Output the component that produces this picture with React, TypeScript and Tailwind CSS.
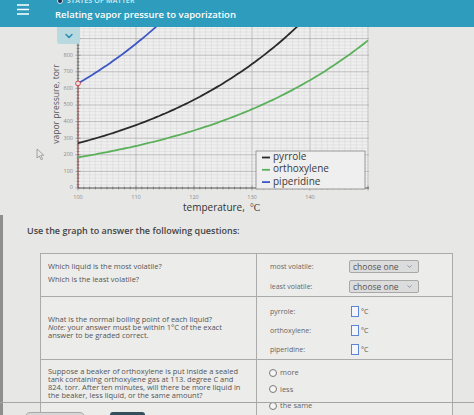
import { ChevronDown } from "lucide-react";

const X0 = 78;
const DEG = 5.8;
const Y0 = 189;
const TORR = 0.166;
const XMAX = 369;
const YTOP = 28;

const tx = (t: number) => X0 + (t - 100) * DEG;
const py = (p: number) => Y0 - p * TORR;

const CURVES = [
  { name: "pyrrole", color: "#2a2a2a", a: 270, b: 0.0339 },
  { name: "orthoxylene", color: "#5bb05b", a: 185, b: 0.0314 },
  { name: "piperidine", color: "#3d57c6", a: 630, b: 0.0322 },
];

function curvePath(a: number, b: number) {
  const pts: string[] = [];
  for (let t = 100; t <= 150.01; t += 0.5) {
    const p = a * Math.exp(b * (t - 100));
    pts.push(`${tx(t).toFixed(1)},${py(p).toFixed(1)}`);
    if (p > 1000) break;
  }
  return "M" + pts.join(" L");
}

function Chart() {
  const degs = Array.from({ length: 51 }, (_, i) => 100 + i);
  const torrs = Array.from({ length: 49 }, (_, i) => i * 20);

  return (
    <svg width={474} height={187} viewBox="0 28 474 187" className="block" fontFamily="'Open Sans', sans-serif">
      <defs>
        <clipPath id="plot">
          <rect x={X0} y={YTOP} width={XMAX - X0} height={Y0 - YTOP} />
        </clipPath>
      </defs>
      <rect x={X0} y={YTOP} width={XMAX - X0} height={Y0 - YTOP} fill="#efefef" />

      {/* grid */}
      {degs.map((d) => (
        <line
          key={"v" + d}
          x1={tx(d)}
          x2={tx(d)}
          y1={YTOP}
          y2={Y0}
          stroke={d % 10 === 0 ? "#a9a9a9" : "#d2d2d2"}
          strokeWidth={d % 10 === 0 ? 0.7 : 0.45}
        />
      ))}
      {torrs.map((p) => (
        <line
          key={"h" + p}
          x1={X0}
          x2={XMAX}
          y1={py(p)}
          y2={py(p)}
          stroke={p % 100 === 0 ? "#a9a9a9" : "#d2d2d2"}
          strokeWidth={p % 100 === 0 ? 0.7 : 0.45}
        />
      ))}

      {/* axes */}
      <line x1={X0} x2={XMAX} y1={Y0} y2={Y0} stroke="#5a5a5a" strokeWidth={0.9} />
      <line x1={X0} x2={X0} y1={YTOP} y2={Y0} stroke="#5a5a5a" strokeWidth={0.9} />
      {degs.map((d) => (
        <line
          key={"xt" + d}
          x1={tx(d)}
          x2={tx(d)}
          y1={Y0 - (d % 10 === 0 ? 2.5 : 1.5)}
          y2={Y0 + (d % 10 === 0 ? 2.5 : 1.5)}
          stroke="#5a5a5a"
          strokeWidth={0.5}
        />
      ))}
      {torrs.map((p) => (
        <line
          key={"yt" + p}
          x1={X0 - (p % 100 === 0 ? 2.5 : 1.5)}
          x2={X0 + (p % 100 === 0 ? 2.5 : 1.5)}
          y1={py(p)}
          y2={py(p)}
          stroke="#5a5a5a"
          strokeWidth={0.5}
        />
      ))}
      <line x1={X0} x2={X0} y1={py(630)} y2={Y0} stroke="#d04848" strokeWidth={1} strokeDasharray="1.5 1.2" />

      {/* tick labels */}
      {[0, 100, 200, 300, 400, 500, 600, 700, 800].map((p) => (
        <text key={"yl" + p} x={73} y={py(p)} fontSize={5.5} fill="#8a8a8a" textAnchor="end" dominantBaseline="middle">
          {p}
        </text>
      ))}
      {[100, 110, 120, 130, 140].map((d) => (
        <text key={"xl" + d} x={tx(d)} y={199.5} fontSize={5.5} fill="#8a8a8a" textAnchor="middle">
          {d}
        </text>
      ))}

      {/* curves */}
      <g clipPath="url(#plot)">
        {CURVES.map((c) => (
          <path key={c.name} d={curvePath(c.a, c.b)} fill="none" stroke={c.color} strokeWidth={1.8} />
        ))}
      </g>
      <circle cx={X0} cy={py(630)} r={2.4} fill="#f3dede" stroke="#c84040" strokeWidth={0.9} />

      {/* legend */}
      <rect x={256} y={152} width={109} height={38} fill="#efefef" stroke="#858585" strokeWidth={0.8} />
      {CURVES.map((c, i) => (
        <g key={"lg" + c.name}>
          <line x1={262} x2={270} y1={158.5 + i * 12.3} y2={158.5 + i * 12.3} stroke={c.color} strokeWidth={1.8} />
          <text x={273} y={158.5 + i * 12.3} fontSize={10} fill="#3a3a3a" dominantBaseline="middle">
            {c.name}
          </text>
        </g>
      ))}

      {/* axis titles */}
      <text
        x={57}
        y={105}
        fontSize={8.5}
        fill="#555"
        textAnchor="middle"
        dominantBaseline="middle"
        transform="rotate(-90 57 105)"
      >
        vapor pressure, torr
      </text>
      <text x={183} y={211.5} fontSize={10} fill="#333">
        temperature,
        <tspan x={250} fontFamily="'Liberation Serif', serif" fontSize={9.5}>
          °C
        </tspan>
      </text>

      {/* mouse pointer */}
      <path
        d="M37 150 L37 159 L39.3 157 L41.2 160.8 L42.6 160.1 L40.8 156.4 L43.8 156.2 Z"
        fill="none"
        stroke="#777"
        strokeWidth={0.6}
      />
    </svg>
  );
}

function Select() {
  return (
    <div className="w-[70px] h-[13px] border border-[#a8a8a8] bg-[#dcdcdc] rounded-[2px] flex items-center justify-between pl-[3px] pr-[5px]">
      <span className="text-[8.5px] leading-[10px] text-[#555]">choose one</span>
      <ChevronDown size={7} strokeWidth={3} className="text-[#7a8aa8]" />
    </div>
  );
}

function Temp({ label }: { label: string }) {
  return (
    <div className="flex items-center h-[11px]">
      <span className="w-[81px] text-[7px] leading-[9px] text-[#666]">{label}</span>
      <span className="w-[8px] h-[11px] border border-[#5b86d6] bg-[#f4f6fb]" />
      <span className="ml-[2px] text-[7px] leading-[9px] text-[#555]">°C</span>
    </div>
  );
}

function Radio({ label }: { label: string }) {
  return (
    <div className="flex items-center h-[9px] gap-[3px]">
      <span className="w-[8px] h-[8px] rounded-full border border-[#7a7a7a] bg-[#f5f5f5]" />
      <span className="text-[7.5px] leading-[9px] text-[#666]">{label}</span>
    </div>
  );
}

export default function App() {
  return (
    <div className="relative w-[474px] h-[415px] overflow-hidden bg-[#e7e7e5] font-['Open_Sans',sans-serif]">
      <header className="h-[27px] bg-[#2e9dbd] flex items-start overflow-hidden">
        <div className="w-[55px] pl-[17px] pt-[4px]">
          <svg width={12} height={11} viewBox="0 0 12 11">
            <path d="M0 1h12M0 5.5h12M0 10h12" stroke="#fff" strokeWidth={1.4} />
          </svg>
        </div>
        <div className="flex flex-col">
          <div className="flex items-center gap-[4px] h-[8px] -mt-[3px] pl-[2px]">
            <span className="w-[6px] h-[6px] rounded-full bg-[#1c2c4a] border border-[#cfe6ef]" />
            <span className="text-[7px] leading-[8px] font-semibold text-[#d9eef6] tracking-[0.2px]">STATES OF MATTER</span>
          </div>
          <div className="mt-[4px] text-[9.5px] leading-[12px] font-semibold text-white">
            Relating vapor pressure to vaporization
          </div>
        </div>
      </header>

      <div className="relative h-[188px]">
        <Chart />
        <div className="absolute left-[57px] top-0 w-[23px] h-[17px] bg-[#b8d9df] rounded-b-[3px] flex items-center justify-center">
          <ChevronDown size={12} strokeWidth={3} className="text-[#2a8db0]" />
        </div>
      </div>

      <div className="border-l-[3px] border-[#8f8f8f] h-[200px]">
        <p className="pl-[24px] pt-[10px] text-[9px] leading-[12px] font-semibold text-[#444]">
          Use the graph to answer the following questions:
        </p>

        <div className="mt-[16px] ml-[37px] w-[413px] border border-[#ababab] bg-[#ececea]">
          <div className="grid grid-cols-[215px_198px] h-[43px] border-b border-[#ababab]">
            <div className="pl-[7px] pt-[7px] text-[7.5px] leading-[10px] text-[#555]">
              <div>Which liquid is the most volatile?</div>
              <div className="mt-[3px]">Which is the least volatile?</div>
            </div>
            <div className="border-l border-[#ababab] pl-[13px] pt-[6px] flex flex-col gap-[7px]">
              <div className="flex items-center">
                <span className="w-[79px] text-[7px] leading-[9px] text-[#666]">most volatile:</span>
                <Select />
              </div>
              <div className="flex items-center">
                <span className="w-[79px] text-[7px] leading-[9px] text-[#666]">least volatile:</span>
                <Select />
              </div>
            </div>
          </div>

          <div className="grid grid-cols-[215px_198px] h-[63px] border-b border-[#ababab]">
            <div className="pl-[7px] pt-[18px] text-[7.5px] leading-[8px] text-[#555]">
              <div>What is the normal boiling point of each liquid?</div>
              <div>
                <i>Note:</i> your answer must be within 1°C of the exact
              </div>
              <div>answer to be graded correct.</div>
            </div>
            <div className="border-l border-[#ababab] pl-[13px] pt-[9px] flex flex-col gap-[8px]">
              <Temp label="pyrrole:" />
              <Temp label="orthoxylene:" />
              <Temp label="piperidine:" />
            </div>
          </div>

          <div className="grid grid-cols-[215px_198px] h-[60px]">
            <div className="pl-[7px] pt-[7px] text-[7.5px] leading-[8px] text-[#555]">
              <div>Suppose a beaker of orthoxylene is put inside a sealed</div>
              <div>tank containing orthoxylene gas at 113. degree C and</div>
              <div>824. torr. After ten minutes, will there be more liquid in</div>
              <div>the beaker, less liquid, or the same amount?</div>
            </div>
            <div className="border-l border-[#ababab] pl-[12px] pt-[8px] flex flex-col gap-[7.5px]">
              <Radio label="more" />
              <Radio label="less" />
              <Radio label="the same" />
            </div>
          </div>
        </div>
      </div>

      <div className="absolute left-0 right-0 top-[402px] h-[13px] border-t border-[#a5a5a5] pointer-events-none flex items-start pt-[9px]">
        <div className="ml-[25px] w-[60px] h-[10px] rounded-[5px] bg-[#d6d6d6] border border-[#a9a9a9]" />
        <div className="ml-[25px] w-[35px] h-[10px] rounded-[3px] bg-[#34505c]" />
      </div>
    </div>
  );
}
